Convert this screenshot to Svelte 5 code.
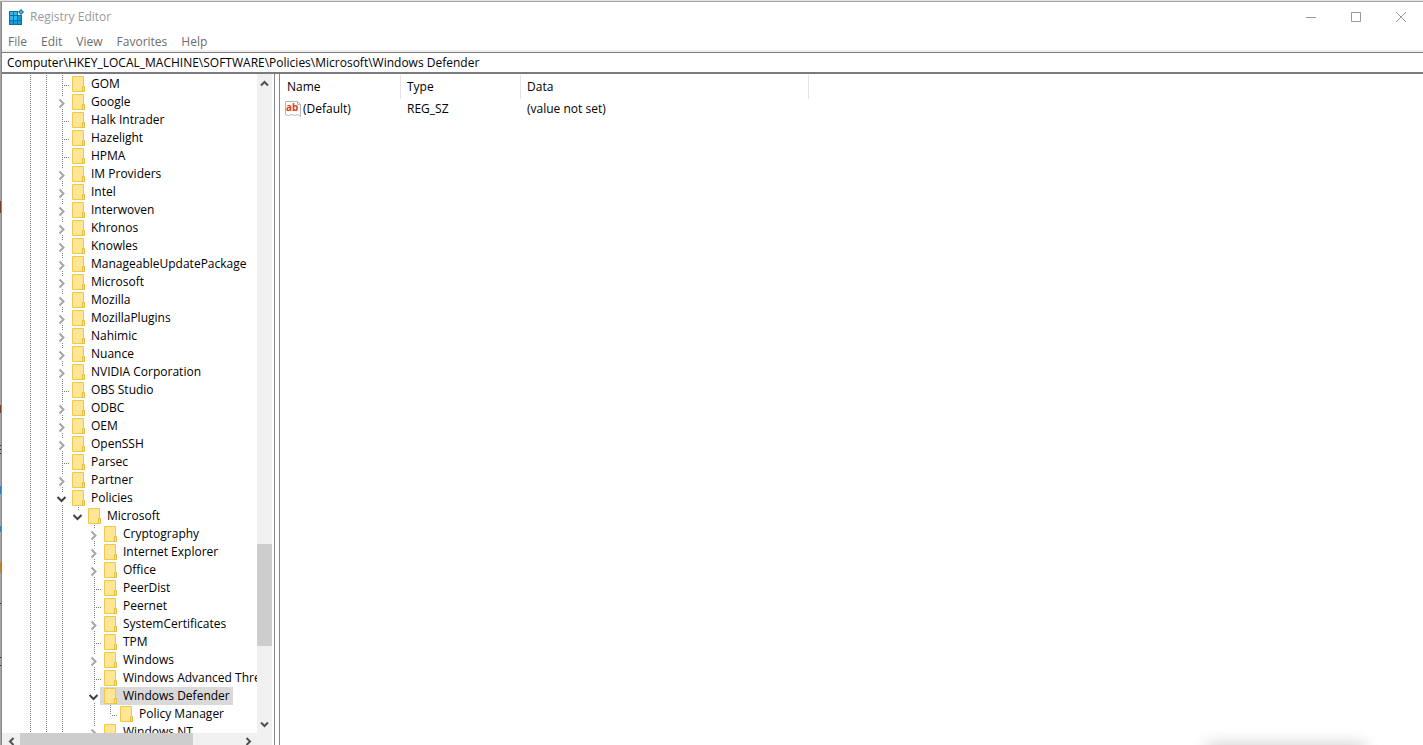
<script lang="ts">
	type Row = { name: string; state: 'leaf' | 'closed' | 'open'; guides: string; last?: boolean };

	// one letter per ancestor column: l = line, b = blank
	function make(guides: string, list: string): Row[] {
		return list.split('|').map((entry) => {
			const mark = entry[0];
			const state = mark === '+' ? 'closed' : mark === '-' ? 'open' : 'leaf';
			return { name: state === 'leaf' ? entry : entry.slice(1), state, guides };
		});
	}

	const rows: Row[] = [
		...make(
			'll',
			'GOM|+Google|Halk Intrader|Hazelight|HPMA|+IM Providers|+Intel|+Interwoven|+Khronos|+Knowles|+ManageableUpdatePackage|+Microsoft|+Mozilla|+MozillaPlugins|+Nahimic|+Nuance|+NVIDIA Corporation|OBS Studio|+ODBC|+OEM|+OpenSSH|Parsec|+Partner|-Policies'
		),
		{ name: 'Microsoft', state: 'open', guides: 'lll', last: true },
		...make(
			'lllb',
			'+Cryptography|+Internet Explorer|+Office|PeerDist|Peernet|+SystemCertificates|TPM|+Windows|Windows Advanced Threat Protection|-Windows Defender'
		),
		{ name: 'Policy Manager', state: 'leaf', guides: 'lllbl', last: true },
		...make('lllb', '+Windows NT')
	];

	const menus = ['File', 'Edit', 'View', 'Favorites', 'Help'];

	let selected = $state('Windows Defender');
	let path = $state('Computer\\HKEY_LOCAL_MACHINE\\SOFTWARE\\Policies\\Microsoft\\Windows Defender');
</script>

{#snippet arrow(d: string)}
	<svg width="9" height="9" viewBox="0 0 9 9" aria-hidden="true">
		<path {d} fill="none" stroke="currentColor" stroke-width="2" />
	</svg>
{/snippet}

<div class="window">
	<header class="titlebar">
		<svg class="app-icon" width="16" height="16" viewBox="0 0 16 16" aria-hidden="true">
			<path fill="#0d6ea3" d="M1 2h9v4h4v10H1z" />
			<path fill="#35b8ee" d="M2 3h3v3H2zM6 3h3v3H6zM2 7h3v4H2zM6 7h3v4H6z" />
			<path fill="#139bd7" d="M10 7h3v4h-3zM2 12h3v3H2zM6 12h3v3H6zM10 12h3v3h-3z" />
			<path fill="#0d6ea3" d="M13 0l3 3-3 3-3-3z" />
			<path fill="#55c8f2" d="M13 1.500l1.500 1.500-1.500 1.500-1.500-1.500z" />
		</svg>
		<h1>Registry Editor</h1>
		<div class="controls">
			<button type="button" aria-label="Minimize">
				<svg width="10" height="10" viewBox="0 0 10 10"><path d="M0 5.500h10" /></svg>
			</button>
			<button type="button" aria-label="Maximize">
				<svg width="10" height="10" viewBox="0 0 10 10"><path d="M.5.5h9v9h-9z" /></svg>
			</button>
			<button type="button" aria-label="Close">
				<svg width="10" height="10" viewBox="0 0 10 10"><path d="M0 0l10 10M10 0L0 10" /></svg>
			</button>
		</div>
	</header>

	<nav class="menubar">
		{#each menus as menu}
			<button type="button">{menu}</button>
		{/each}
	</nav>

	<input class="address" type="text" aria-label="Address" bind:value={path} />

	<div class="panes">
		<div class="tree-pane">
			<ul class="tree">
				{#each rows as row}
					<li>
						{#each row.guides as guide}
							<span class="cell" class:line={guide === 'l'}></span>
						{/each}
						{#if row.state === 'leaf'}
							<span class="cell joint line" class:last={row.last}></span>
						{:else}
							<button
								type="button"
								class="cell joint toggle line"
								class:last={row.last}
								class:open={row.state === 'open'}
								aria-label="Toggle {row.name}"
							>
								<svg width="11" height="13" viewBox="0 0 11 13" aria-hidden="true">
									<path d={row.state === 'open' ? 'M1.500 5l4 4 4-4' : 'M3.500 3.500l4 4-4 4'} />
								</svg>
							</button>
						{/if}
						<button
							type="button"
							class="key"
							class:selected={selected === row.name}
							onclick={() => (selected = row.name)}
						>
							<svg width="13" height="16" viewBox="0 0 13 16" aria-hidden="true">
								<path fill="#ffe694" stroke="#efc94c" d="M.5.5h11v15H.5z" />
								<path fill="#ffe28a" stroke="#e8bd3d" d="M10.500 10.500h2v5h-2z" />
							</svg>
							<span>{row.name}</span>
						</button>
					</li>
				{/each}
			</ul>
			<div class="vscroll">
				<button type="button" aria-label="Scroll up">{@render arrow('M1 6.500l3.500-3.500 3.500 3.500')}</button>
				<div class="track"><div class="thumb"></div></div>
				<button type="button" aria-label="Scroll down">{@render arrow('M1 2.500l3.500 3.500 3.500-3.500')}</button>
			</div>
			<div class="hscroll">
				<button type="button" aria-label="Scroll left">{@render arrow('M6.500 1l-3.500 3.500 3.500 3.500')}</button>
				<div class="track"><div class="thumb"></div></div>
				<button type="button" aria-label="Scroll right">{@render arrow('M2.500 1l3.500 3.500-3.500 3.500')}</button>
			</div>
		</div>

		<div class="values">
			<table>
				<thead>
					<tr><th class="name">Name</th><th class="type">Type</th><th class="data">Data</th></tr>
				</thead>
				<tbody>
					<tr>
						<td>
							<div class="value">
								<svg width="16" height="16" viewBox="0 0 16 16" aria-hidden="true">
									<path fill="#fff" stroke="#b4b4b4" d="M.5.5h12l3 3v12l-3-2-3 1-3-1-3 1-3-1z" />
									<path fill="none" stroke="#b4b4b4" d="M12.500.5v3h3" />
									<text x="1" y="10">ab</text>
								</svg>
								<span>(Default)</span>
							</div>
						</td>
						<td>REG_SZ</td>
						<td>(value not set)</td>
					</tr>
				</tbody>
			</table>
		</div>
	</div>
	<svg class="edge" width="2" height="744" aria-hidden="true">
		<path fill="#a6a6aa" d="M0 0h1v744H0z" />
		<path fill="#85858a" d="M1 0h1v744H1z" />
		<path fill="#7a3f2c" d="M0 199h1v12H0zM0 403h1v8H0z" />
		<path fill="#2f83c4" d="M0 484h1v8H0zM0 524h1v6H0z" />
		<path fill="#c08036" d="M0 560h1v11H0z" />
		<path fill="#333" d="M0 443h1v1H0zM0 447h1v1H0zM0 451h1v1H0zM0 601h1v1H0zM0 655h1v1H0zM0 663h1v1H0z" />
	</svg>
	<div class="shade"></div>
</div>

<style>
	:global(body) {
		background: #fff;
	}

	.window {
		position: relative;
		display: flex;
		flex-direction: column;
		height: 100vh;
		overflow: hidden;
		box-sizing: border-box;
		border-top: 1px solid #e3e3e3;
		background: #fff;
		color: #000;
		font: 12px/18px 'Open Sans', 'Noto Sans', sans-serif;
	}

	button {
		padding: 0;
		border: 0;
		background: none;
		color: inherit;
		font: inherit;
	}

	.titlebar {
		display: flex;
		align-items: center;
		flex: none;
		height: 30px;
		padding-left: 8px;
		border-top: 1px solid #a6a6a6;
	}

	h1 {
		margin: 0 0 0 6px;
		color: #999;
		font-size: 12px;
		font-weight: 400;
	}

	.controls {
		display: flex;
		margin-left: auto;
	}

	.controls button {
		display: grid;
		place-items: center;
		width: 45px;
		height: 28px;
	}

	.controls path {
		fill: none;
		stroke: #999;
	}

	.menubar {
		display: flex;
		flex: none;
		align-items: flex-end;
		gap: 14px;
		height: 18px;
		padding: 0 8px;
		border-bottom: 2px solid #f0f0f0;
		color: #6d6d6d;
	}

	.menubar button {
		height: 17px;
	}

	.address {
		flex: none;
		height: 22px;
		padding: 0 6px;
		box-sizing: border-box;
		border: 1px solid #7a7a7f;
		border-width: 1px 0 2px 1px;
		outline: 0;
		font: inherit;
	}

	.panes {
		display: flex;
		flex: 1;
		min-height: 0;
	}

	.tree-pane {
		display: grid;
		grid-template: minmax(0, 1fr) 17px / minmax(0, 1fr) 15px;
		flex: none;
		width: 270px;
		height: calc(100% + 5px);
		margin-left: 2px;
		padding-right: 2px;
		border-right: 1px solid #828790;
	}

	.tree {
		margin: 0;
		padding: 1px 0 0 20px;
		overflow: hidden;
		list-style: none;
	}

	li {
		display: flex;
		height: 18px;
		white-space: nowrap;
	}

	.cell {
		position: relative;
		flex: none;
		width: 16px;
		height: 18px;
	}

	.line {
		background: repeating-linear-gradient(#777 0 1px, transparent 1px 2px) 8px 0 / 1px 18px no-repeat;
	}

	.joint {
		width: 14px;
	}

	.joint.last {
		background-size: 1px 10px;
	}

	span.joint::after {
		content: '';
		position: absolute;
		top: 10px;
		left: 10px;
		width: 6px;
		height: 1px;
		background: repeating-linear-gradient(90deg, #777 0 1px, transparent 1px 2px);
	}

	.toggle svg {
		display: block;
		margin: 1px 0 0 2px;
		background: #fff;
	}

	.toggle path {
		fill: none;
		stroke: #a6a6a6;
		stroke-width: 2;
	}

	.toggle.open path {
		stroke: #404040;
	}

	.key {
		display: flex;
		align-items: center;
		gap: 6px;
		padding: 0 3px 0 4px;
	}

	.key.selected {
		background: #d9d9d9;
	}

	.vscroll,
	.hscroll {
		display: flex;
		background: #f0f0f0;
		color: #505050;
	}

	.hscroll {
		grid-column: 1 / -1;
	}

	.vscroll {
		flex-direction: column;
	}

	.hscroll button,
	.vscroll button {
		display: grid;
		flex: none;
		place-items: center;
		width: 15px;
		height: 18px;
	}

	.hscroll button {
		width: 18px;
		height: 17px;
	}

	.hscroll button:last-child {
		margin-right: 15px;
	}

	.track {
		flex: 1;
		display: flex;
	}

	.vscroll .track {
		flex-direction: column;
	}

	.vscroll .track::before {
		content: '';
		flex: 453;
	}

	.vscroll .track::after {
		content: '';
		flex: 69;
	}

	.vscroll .thumb {
		flex: 103;
	}

	.hscroll .track::after {
		content: '';
		flex: 46;
	}

	.hscroll .thumb {
		flex: 173;
	}

	.thumb {
		background: #cdcdcd;
	}

	.values {
		flex: 1;
		margin-left: 4px;
		border-left: 1px solid #828790;
		padding-top: 1px;
	}

	table {
		border-collapse: collapse;
		table-layout: fixed;
		width: 529px;
	}

	th,
	td {
		padding: 0 0 0 6px;
		text-align: left;
		font-weight: 400;
	}

	th {
		height: 24px;
		box-shadow: inset -1px 0 #e5e5e5;
	}

	td {
		height: 20px;
	}

	.name {
		width: 114px;
	}

	.type {
		width: 114px;
	}

	td:first-child {
		padding-left: 5px;
	}

	th:first-child {
		padding-left: 7px;
	}

	.value {
		display: flex;
		align-items: center;
		gap: 2px;
	}

	.value text {
		fill: #d9411e;
		font: bold 10px 'Open Sans', sans-serif;
	}

	/* strip of desktop showing past the window frame */
	.edge {
		position: absolute;
		top: 1px;
		left: 0;
	}

	.shade {
		position: absolute;
		right: 58px;
		bottom: -10px;
		width: 158px;
		height: 10px;
		box-shadow: 0 0 16px rgba(0, 0, 0, 0.25);
	}
</style>
